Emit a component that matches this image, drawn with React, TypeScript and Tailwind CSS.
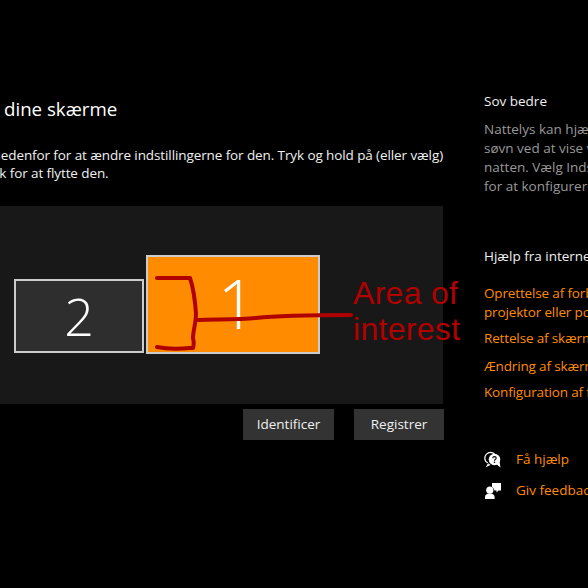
const font = { fontFamily: '"Open Sans", "Noto Sans", sans-serif' }

function HelpIcon() {
  return (
    <svg width="18" height="18" viewBox="0 0 18 18" fill="none">
      <path d="M4.500 12.500L3.200 15l3-1.500" stroke="#fff" strokeWidth="1.200" />
      <path d="M3.800 11.800C1.800 10.800.8 9 .8 7.200.8 4 3.400 1.300 6.500 1.300c1.700 0 3 .6 4 1.700" stroke="#fff" strokeWidth="1.200" />
      <circle cx="10.500" cy="8.500" r="5.800" fill="#fff" />
      <path d="M12 13l4.500 3.500-1-6z" fill="#fff" />
      <path d="M8.800 7.200c0-1 .8-1.600 1.700-1.600s1.700.6 1.700 1.500c0 1.300-1.700 1.300-1.700 2.600" stroke="#000" strokeWidth="1.100" />
      <circle cx="10.500" cy="11.300" r=".8" fill="#000" />
    </svg>
  )
}

function FeedbackIcon() {
  return (
    <svg width="18" height="18" viewBox="0 0 18 18" fill="#fff">
      <path d="M8 1h9v7.500h-2.500L12.500 10.500v-2h-2C10.200 7 9.200 5.500 8 5z" />
      <circle cx="5.800" cy="8.200" r="3.600" />
      <path d="M1 17v-2c0-2.200 1.800-3.500 4.800-3.500s4.800 1.300 4.800 3.500v2z" />
    </svg>
  )
}

export default function App() {
  return (
    <div className="w-[588px] h-[588px] bg-black overflow-hidden flex text-white" style={font}>
      {/* left column, runs off the left edge */}
      <div className="shrink-0 w-[444px] pt-[96px]">
        <h2 className="text-[18.7px] leading-[26px] whitespace-nowrap pl-[4px]">dine skærme</h2>
        <div className="mt-[24px] -ml-[106px] text-[13.5px] leading-[18px] tracking-[-0.1px] text-[#f0f0f0] whitespace-nowrap">
          <p>Vælg en skærm nedenfor for at ændre indstillingerne for den. Tryk og hold på (eller vælg)</p>
          <p className="pl-[65px]">og træk for at flytte den.</p>
        </div>

        <div className="relative mt-[24px] h-[198px] w-[443px] bg-[#181818] flex items-end gap-[2px] pl-[14px] pb-[50px]">
          <div className="w-[130px] h-[74px] mb-[1px] border-2 border-[#cccccc] bg-[#2e2e2e] flex items-center justify-center text-[52px] font-light leading-none">
            2
          </div>
          <div className="w-[174px] h-[99px] pl-[8px] pb-[3px] border-2 border-[#cccccc] bg-[#ff8c00] flex items-center justify-center text-[68px] font-light leading-none">
            1
          </div>
          {/* hand drawn annotation on top of the monitors */}
          <svg className="absolute left-0 top-0" width="443" height="198" fill="none">
            <path
              d="M157 72h33c3 9 5 20 6 36 0 10-3 16-3 24 1 4 1 7 0 10h-3c-10 1-24 1-33-1M196 114c18-1 40 0 60-2 26-3 62-3 95-3"
              stroke="#b00000"
              strokeWidth="4"
              strokeLinecap="round"
              strokeLinejoin="round"
            />
          </svg>
          <div
            className="absolute left-[353px] top-[69px] text-[32px] leading-[36px] tracking-[0.3px] text-[#b00000] whitespace-nowrap"
            style={{ fontFamily: '"Liberation Sans", Arial, sans-serif' }}
          >
            <div>Area of</div>
            <div>interest</div>
          </div>
        </div>

        <div className="mt-[5px] flex justify-end gap-[20px]">
          <button className="w-[91px] h-[31px] bg-[#333333] text-[13.5px] text-[#f0f0f0]">Identificer</button>
          <button className="w-[90px] h-[31px] bg-[#333333] text-[13.5px] text-[#f0f0f0]">Registrer</button>
        </div>
      </div>

      {/* right column, cut off by the window */}
      <div className="shrink-0 ml-[40px] pt-[92px] text-[13.5px] leading-[19px] whitespace-nowrap">
        <h3 className="text-[#f0f0f0]">Sov bedre</h3>
        <div className="mt-[9px] text-[#999999]">
          <p>Nattelys kan hjælpe dig med at få bedre</p>
          <p>søvn ved at vise varmere farver om</p>
          <p>natten. Vælg Indstillinger for natlys</p>
          <p>for at konfigurere det.</p>
        </div>
        <h3 className="mt-[51px] text-[#f0f0f0]">Hjælp fra internettet</h3>
        <div className="mt-[18px] text-[#ff8c00] tracking-[-0.15px]">
          <p>Oprettelse af forbindelse til en</p>
          <p>projektor eller pc</p>
          <p className="mt-[7px]">Rettelse af skærmflimmer</p>
          <p className="mt-[9px]">Ændring af skærmens opløsning</p>
          <p className="mt-[7px]">Konfiguration af flere skærme</p>
        </div>
        <div className="mt-[48px] flex items-center gap-[14px] text-[#ff8c00]">
          <HelpIcon />
          <span>Få hjælp</span>
        </div>
        <div className="mt-[12px] flex items-center gap-[14px] text-[#ff8c00]">
          <FeedbackIcon />
          <span>Giv feedback</span>
        </div>
      </div>
    </div>
  )
}
